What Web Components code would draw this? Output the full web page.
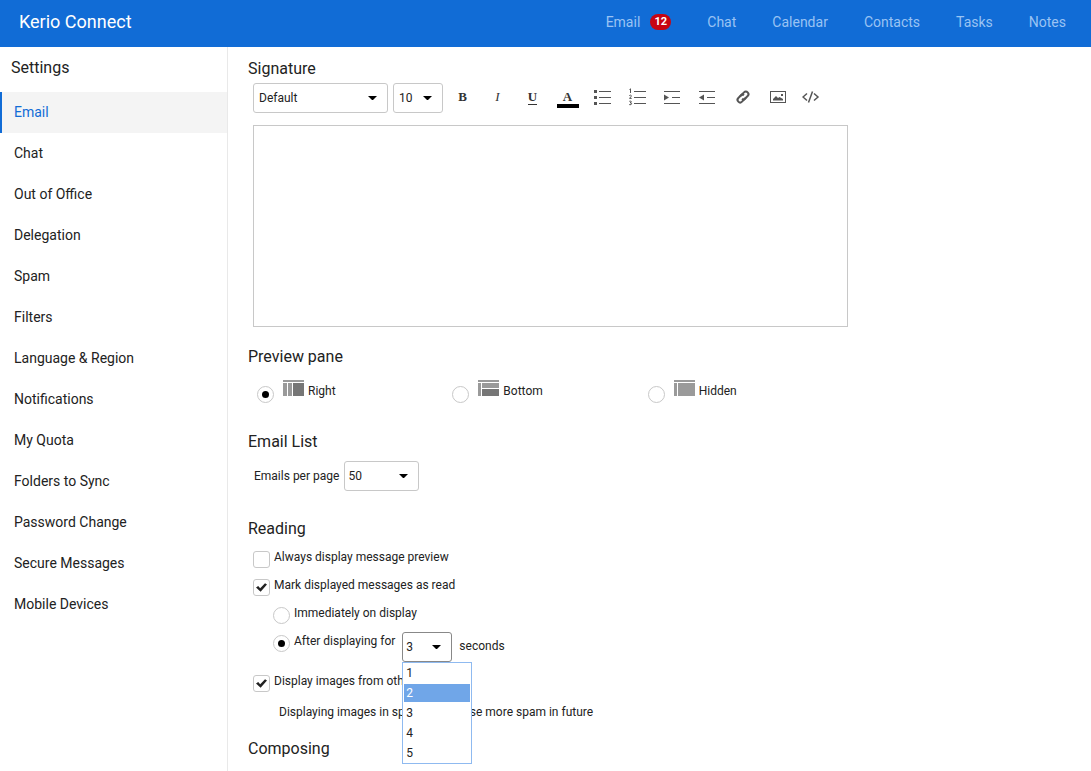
<!DOCTYPE html>
<html lang="en">
<head>
<meta charset="utf-8">
<meta name="viewport" content="width=device-width, initial-scale=1">
<title>Kerio Connect - Settings</title>
<style>
html, body { margin: 0; }
body { font: 12px/14px Roboto, "Liberation Sans", sans-serif; color: #222; background: #fff; }
</style>
</head>
<body>
<kc-settings-page></kc-settings-page>
<script>
const controls = `
*, *::before { box-sizing: border-box; }
input { appearance: none; flex: none; display: grid; place-items: center; width: 17px; height: 17px; margin: 1px 0 0; border: 1px solid #c8c8c8; background: #fff; }
input[type=checkbox] { border-radius: 3px; }
input[type=radio] { border-radius: 50%; }
input[type=radio]:checked::before { content: ""; width: 7px; height: 7px; border-radius: 50%; background: #000; }
input[type=checkbox]:checked::before { content: ""; width: 11px; height: 9px; background: #222; clip-path: polygon(0 50%, 20% 32%, 38% 58%, 82% 2%, 100% 18%, 42% 98%); }
`;

function define(name, html, setup) {
  const template = document.createElement('template');
  template.innerHTML = html;
  customElements.define(name, class extends HTMLElement {
    constructor() {
      super();
      this.attachShadow({ mode: 'open' }).append(template.content.cloneNode(true));
    }
    connectedCallback() { if (setup) setup(this, this.shadowRoot); }
  });
}

/* Drop-down with its label; options="a,b,c", value, label. */
define('kc-select', `
<style>
:host { display: inline-flex; align-items: center; gap: 5px; }
.box { display: grid; align-items: center; width: var(--select-width, 50px); }
select, svg { grid-area: 1 / 1; }
select { appearance: none; box-sizing: border-box; width: 100%; height: 30px; margin: 0; padding: 0 20px 0 var(--select-indent, 5px); border: 1px solid var(--select-border, #c8c8c8); border-radius: 3px; background: #fff; color: inherit; font: inherit; }
svg { justify-self: end; margin-right: 11px; pointer-events: none; }
</style>
<label for="s"><slot></slot></label>
<div class="box"><select id="s"></select><svg width="9" height="4"><path d="M0 0h9L5 4H4z"/></svg></div>`,
(host, root) => {
  const select = root.querySelector('select');
  select.replaceChildren(...host.getAttribute('options').split(',').map(o => new Option(o, o, false, o === host.getAttribute('value'))));
  if (host.hasAttribute('label')) { select.setAttribute('aria-label', host.getAttribute('label')); root.querySelector('label').hidden = true; }
});

define('kc-header', `
<style>
:host { display: flex; align-items: center; justify-content: space-between; height: 47px; padding: 0 25px 3px 19px; box-sizing: border-box; background: #116cd6; }
h1 { margin: 0; font: 18px/20px Roboto, sans-serif; color: #fff; }
nav { display: flex; gap: 36px; font-size: 14px; line-height: 16px; }
a { color: #9ac3f3; text-decoration: none; display: flex; align-items: center; gap: 10px; }
.badge { min-width: 21px; height: 16px; border-radius: 8px; background: #c70512; color: #fff; font-size: 11px; font-weight: 700; text-align: center; }
</style>
<h1>Kerio Connect</h1>
<nav><a href="#email">Email <span class="badge">12</span></a><a href="#chat">Chat</a><a href="#calendar">Calendar</a><a href="#contacts">Contacts</a><a href="#tasks">Tasks</a><a href="#notes">Notes</a></nav>`);

define('kc-nav-item', `
<style>
:host { display: block; }
a { display: block; padding: 12px 12px 13px; border-left: 2px solid transparent; font-size: 14px; line-height: 16px; color: #222; text-decoration: none; }
:host([active]) a { border-color: #116cd6; background: #f4f4f4; color: #116cd6; }
</style>
<a href="#settings"><slot></slot></a>`);

define('kc-sidebar', `
<style>
:host { display: block; border-right: 1px solid #e9e9e9; }
h2 { margin: 0; padding: 11px 11px 14px; font: 16px/20px Roboto, sans-serif; }
</style>
<h2>Settings</h2><nav><slot></slot></nav>`);

define('kc-section', `
<style>
:host { display: block; }
h3 { margin: 0; font: 16px/20px Roboto, sans-serif; }
</style>
<h3></h3><slot></slot>`,
(host, root) => { root.querySelector('h3').textContent = host.getAttribute('heading'); });

define('kc-signature', `
<style>
:host { display: block; margin: 4px 5px 0; max-width: 595px; }
.bar { display: flex; align-items: start; }
.font { --select-width: 135px; margin-right: 5px; }
.size { margin-right: 2px; }
button { display: grid; place-items: center; width: 35px; height: 28px; padding: 0; border: 0; background: none; color: #333; font: 13px/14px "Liberation Serif", serif; }
.b { font-weight: 700; } .i { font-style: italic; }
.u { font-weight: 700; }
.u span { border-bottom: 1px solid #333; }
.a { font-weight: 700; place-content: center; padding-top: 4px; }
.a i { width: 22px; height: 4px; background: #000; }
svg { fill: none; stroke: #555; shape-rendering: crispEdges; }
.smooth { shape-rendering: auto; }
textarea { display: block; box-sizing: border-box; width: 100%; height: 202px; margin: 12px 0 0; border: 1px solid #c8c8c8; background: #fff; resize: none; font: inherit; }
</style>
<div class="bar">
<kc-select class="font" label="Font" options="Default,Arial,Georgia" value="Default"></kc-select>
<kc-select class="size" label="Font size" options="8,10,12,14" value="10"></kc-select>
<button class="b" aria-label="Bold">B</button>
<button class="i" aria-label="Italic">I</button>
<button class="u" aria-label="Underline"><span>U</span></button>
<button class="a" aria-label="Text colour">A<i></i></button>
<button aria-label="Bulleted list"><svg width="17" height="16"><path d="M5 2.5h12M5 8.5h12M5 14.5h12"/><path d="M0 2.5h3M0 8.5h3M0 14.5h3" stroke-width="3"/></svg></button>
<button aria-label="Numbered list"><svg width="17" height="18"><path d="M5 3.5h12M5 9.5h12M5 15.5h12"/><path class="smooth" d="M.5 1.5l1-.7V5M.3 7.6q1-1.1 2 0 .3.7-1.8 2.8h2.2M.3 13.3q2-.8 2 .5 0 .9-1.2.9 1.5 0 1.5 1.1 0 1.4-2.4.8"/></svg></button>
<button aria-label="Increase indent"><svg width="17" height="16"><path d="M0 2.5h16M8 8.5h8M0 14.5h16"/><path class="smooth" d="M0 5.5l5 3-5 3z" fill="#555" stroke="none"/></svg></button>
<button aria-label="Decrease indent"><svg width="17" height="16"><path d="M0 2.5h16M8 8.5h8M0 14.5h16"/><path class="smooth" d="M5 5.5l-5 3 5 3z" fill="#555" stroke="none"/></svg></button>
<button aria-label="Link"><svg class="smooth" width="16" height="16" stroke-width="2"><g transform="rotate(-45 8 8)"><path d="M9.5 10.6H4a2.6 2.6 0 0 1 0-5.2h3.5q2.2 0 2.5 2"/><path d="M6.5 5.4H12a2.6 2.6 0 0 1 0 5.2H8.5q-2.2 0-2.5-2"/></g></svg></button>
<button aria-label="Image"><svg width="16" height="14"><path d="M.5 1.5h15v11H.5z"/><path class="smooth" d="M3 10.5V9l3-3 2 2 1.500-1L13 9v1.500z" fill="#555" stroke="none"/><path d="M11 4h2v2h-2z" fill="#555" stroke="none"/></svg></button>
<button aria-label="HTML source"><svg class="smooth" width="22" height="14" stroke-width="1.500"><path d="M5 3.500L1 7l4 3.500M12 3.500L16 7l-4 3.500M10.500 1.500l-4 11"/></svg></button>
</div>
<textarea aria-label="Signature text"></textarea>`);

define('kc-preview-pane', `
<style>${controls}
:host { display: grid; grid-template-columns: repeat(3, 1fr); max-width: 586px; margin: 13px 0 0 9px; }
label { display: flex; align-items: start; }
input { margin-top: 6px; }
svg { margin: 0 4px 0 9px; fill: #9a9a9a; shape-rendering: crispEdges; }
.dark { fill: #767676; }
span { margin-top: 4px; }
</style>
<label><input type="radio" name="pane" checked><svg width="21" height="16"><path d="M0 0h21v2H0zM0 3h4v13H0zM5 3h4v13H5z"/><path class="dark" d="M10 3h11v13H10z"/></svg><span>Right</span></label>
<label><input type="radio" name="pane"><svg width="21" height="16"><path d="M0 0h21v2H0zM0 3h3v13H0zM4 3h17v5H4z"/><path class="dark" d="M4 9h17v7H4z"/></svg><span>Bottom</span></label>
<label><input type="radio" name="pane"><svg width="21" height="16"><path d="M0 0h21v2H0zM0 3h3v13H0zM4 3h17v13H4z"/></svg><span>Hidden</span></label>`);

/* Opened list below a drop-down, with the pointed option highlighted. */
define('kc-option-list', `
<style>
:host { display: block; box-sizing: border-box; padding: 1px; border: 1px solid #8fbaf0; background: #fff; }
::slotted(button) { display: block; box-sizing: border-box; width: 100%; height: 18px; margin: 0 0 2px; padding: 0 2px; border: 0; background: none; color: #222; font: inherit; text-align: left; }
::slotted(button:last-child) { margin: 0; }
::slotted(button[aria-selected=true]) { background: #70a6e8; color: #fff; }
</style>
<slot></slot>`);

define('kc-reading', `
<style>${controls}
:host { display: block; margin: 11px 5px 0; }
label { display: flex; align-items: start; gap: 4px; }
.row { margin-bottom: 10px; }
.sub { margin-left: 20px; }
.delay { display: flex; align-items: start; margin-bottom: 12px; }
.delay > span { margin: 5px 0 0 7px; }
.picker { position: relative; margin: -2px 0 0 7px; --select-border: #888; --select-indent: 3px; }
.picker kc-select { display: flex; }
kc-option-list { position: absolute; z-index: 1; top: 100%; left: 0; width: 70px; }
p { margin: 13px 26px 0; }
</style>
<label class="row"><input type="checkbox">Always display message preview</label>
<label class="row"><input type="checkbox" checked>Mark displayed messages as read</label>
<label class="row sub"><input type="radio" name="mark">Immediately on display</label>
<div class="delay sub">
<label><input type="radio" name="mark" checked>After displaying for</label>
<div class="picker"><kc-select label="Seconds" options="1,2,3,4,5" value="3"></kc-select>
<kc-option-list role="listbox" aria-label="Seconds"><button role="option">1</button><button role="option" aria-selected="true">2</button><button role="option">3</button><button role="option">4</button><button role="option">5</button></kc-option-list></div>
<span>seconds</span>
</div>
<label><input type="checkbox" checked>Display images from other servers</label>
<p>Displaying images in spam may cause more spam in future</p>`);

define('kc-settings-page', `
<style>
:host { display: grid; grid-template: auto 1fr / 228px 1fr; min-height: 100vh; }
kc-header { grid-column: 1 / -1; }
main { padding: 12px 20px; }
.pane { margin-top: 20px; }
.list { margin-top: 29px; }
.reading { margin-top: 28px; }
.composing { margin-top: 20px; }
.per-page { display: flex; margin: 9px 6px 0; --select-width: 75px; --select-indent: 3px; }
</style>
<kc-header></kc-header>
<kc-sidebar>
<kc-nav-item active>Email</kc-nav-item><kc-nav-item>Chat</kc-nav-item><kc-nav-item>Out of Office</kc-nav-item><kc-nav-item>Delegation</kc-nav-item><kc-nav-item>Spam</kc-nav-item><kc-nav-item>Filters</kc-nav-item><kc-nav-item>Language &amp; Region</kc-nav-item><kc-nav-item>Notifications</kc-nav-item><kc-nav-item>My Quota</kc-nav-item><kc-nav-item>Folders to Sync</kc-nav-item><kc-nav-item>Password Change</kc-nav-item><kc-nav-item>Secure Messages</kc-nav-item><kc-nav-item>Mobile Devices</kc-nav-item>
</kc-sidebar>
<main>
<kc-section heading="Signature"><kc-signature></kc-signature></kc-section>
<kc-section class="pane" heading="Preview pane"><kc-preview-pane></kc-preview-pane></kc-section>
<kc-section class="list" heading="Email List"><kc-select class="per-page" options="25,50,100" value="50">Emails per page</kc-select></kc-section>
<kc-section class="reading" heading="Reading"><kc-reading></kc-reading></kc-section>
<kc-section class="composing" heading="Composing"></kc-section>
</main>`);
</script>
</body>
</html>
